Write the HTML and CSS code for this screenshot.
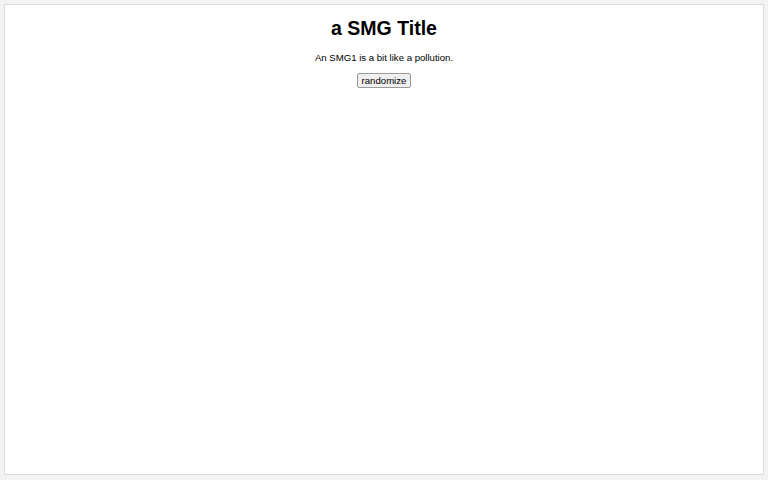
FILE: index.html
```html
<!DOCTYPE html>
<html lang="en">
<head>
    <meta charset="UTF-8">
    <title>a SMG Title</title>
    <link rel="stylesheet" href="styles.css">
</head>
<body>
    <div class="page">
        <h1>a SMG Title</h1>
        <p class="desc">An SMG1 is a bit like a pollution.</p>
        <button class="randomize">randomize</button>
    </div>
</body>
</html>
```

FILE: styles.css
```css
body {
    font-family: "Liberation Sans", Arial, sans-serif;
    background: #f3f3f3;
    margin: 0;
    padding: 4px 4px 5px 4px;
    height: 100vh;
    box-sizing: border-box;
    display: flex;
}

.page {
    flex: 1;
    background: #ffffff;
    border: 1px solid #dcdcdc;
    display: flex;
    flex-direction: column;
    align-items: center;
    padding-top: 11px;
}

.page h1 {
    font-size: 19.5px;
    margin: 0;
    line-height: 24px;
}

.desc {
    font-size: 9.6px;
    margin: 12px 0 10px 0;
}

.randomize {
    font-family: "Liberation Sans", Arial, sans-serif;
    font-size: 9.6px;
    padding: 1px 4px;
    border: 1px solid #9a9a9a;
    border-radius: 2px;
    background: #efefef;
    color: #000;
}
```
